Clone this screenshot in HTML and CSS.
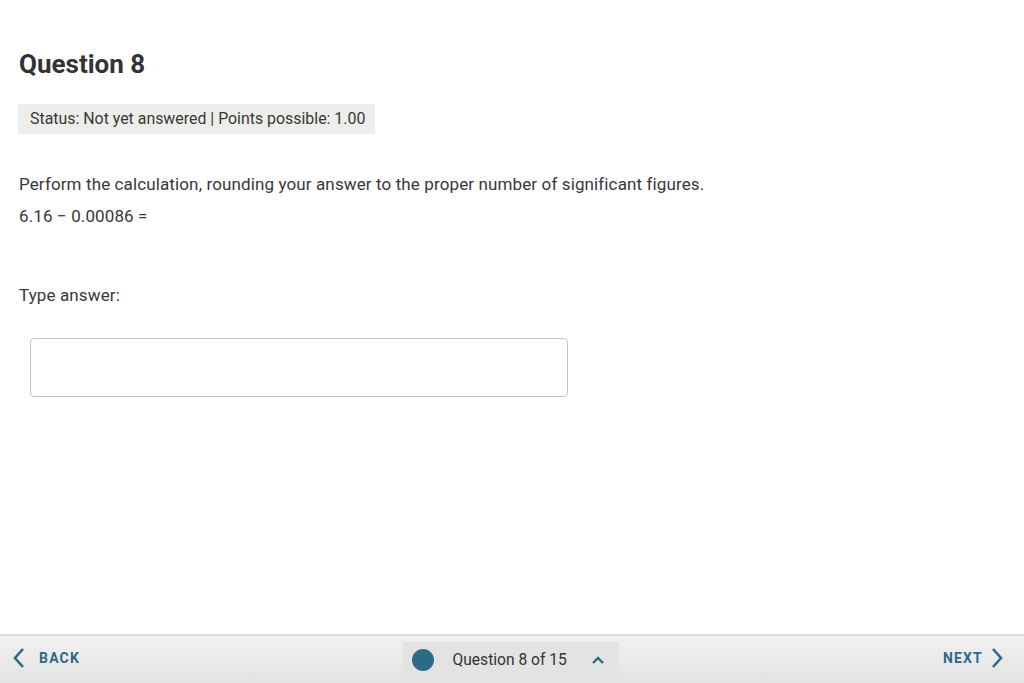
FILE: index.html
```html
<!DOCTYPE html>
<html lang="en">
<head>
  <meta charset="UTF-8" />
  <title>Question 8</title>
  <link rel="stylesheet" href="styles.css">
</head>
<body>

  <!-- Question -->
  <div class="page">
    <h1 class="title">Question 8</h1>
    <div class="status">Status: Not yet answered | Points possible: 1.00</div>
    <p class="prompt">Perform the calculation, rounding your answer to the proper number of significant figures.</p>
    <p class="equation">6.16 &minus; 0.00086 =</p>
    <p class="label">Type answer:</p>
    <input class="answer" type="text" />
  </div>

  <!-- Footer nav -->
  <div class="footer">
    <button class="nav back">
      <svg width="14" height="22" viewBox="0 0 14 22"><path d="M11 2 L3 11 L11 20" fill="none" stroke="#2e6a86" stroke-width="2.6"/></svg>
      BACK
    </button>
    <div class="progress">
      <span class="dot"></span>
      <span class="progress-text">Question 8 of 15</span>
      <svg width="14" height="10" viewBox="0 0 14 10"><path d="M2 8 L7 3 L12 8" fill="none" stroke="#2e6a86" stroke-width="2.4"/></svg>
    </div>
    <button class="nav next">
      NEXT
      <svg width="14" height="22" viewBox="0 0 14 22"><path d="M3 2 L11 11 L3 20" fill="none" stroke="#2e6a86" stroke-width="2.6"/></svg>
    </button>
  </div>

</body>
</html>
```

FILE: styles.css
```css
* {
  margin: 0; padding: 0;
  box-sizing: border-box;
  font-family: Roboto, "Liberation Sans", sans-serif;
}
body {
  background-color: white;
  height: 683px;
  display: flex;
  flex-direction: column;
  color: #383838;
}
.page {
  flex: 1;
  padding: 48px 18px 0 18px;
}
.title {
  font-size: 26px;
  font-weight: bold;
  color: #333;
  margin-left: 1px;
  line-height: 32px;
}
.status {
  display: inline-block;
  margin-top: 24px;
  background-color: #edeeea;
  padding: 0 10px 0 12px;
  height: 30px;
  line-height: 30px;
  font-size: 15.9px;
}
.prompt, .equation, .label {
  margin-left: 1px;
  font-size: 17px;
  letter-spacing: 0.12px;
  line-height: 24px;
}
.prompt {
  margin-top: 38px;
}
.equation {
  margin-top: 8px;
}
.label {
  margin-top: 55px;
}
.answer {
  display: block;
  margin-top: 31px;
  margin-left: 12px;
  width: 538px;
  height: 59px;
  border: 1px solid #c4c4c4;
  border-radius: 4px;
  font-size: 16px;
  padding: 0 10px;
  outline: none;
}
.footer {
  height: 49px;
  border-top: 2px solid #dcdcd8;
  background: linear-gradient(#f1f1f1, #e3e3e3);
  display: flex;
  align-items: center;
  justify-content: space-between;
  padding: 0 20px 3px 12px;
}
.nav {
  display: flex;
  align-items: center;
  gap: 13px;
  background: none;
  border: none;
  color: #2e6a86;
  font-weight: bold;
  font-size: 14px;
  letter-spacing: 1.2px;
  cursor: pointer;
}
.next {
  gap: 7px;
}
.progress {
  display: flex;
  align-items: center;
  width: 216px;
  height: 36px;
  background-color: #e3e3e3;
  padding: 0 14px 0 9px;
  margin-top: 3px;
}
.dot {
  width: 22px;
  height: 22px;
  border-radius: 50%;
  background-color: #2e6a86;
}
.progress-text {
  margin-left: 18px;
  font-size: 15.6px;
  color: #333;
  flex: 1;
}
```
